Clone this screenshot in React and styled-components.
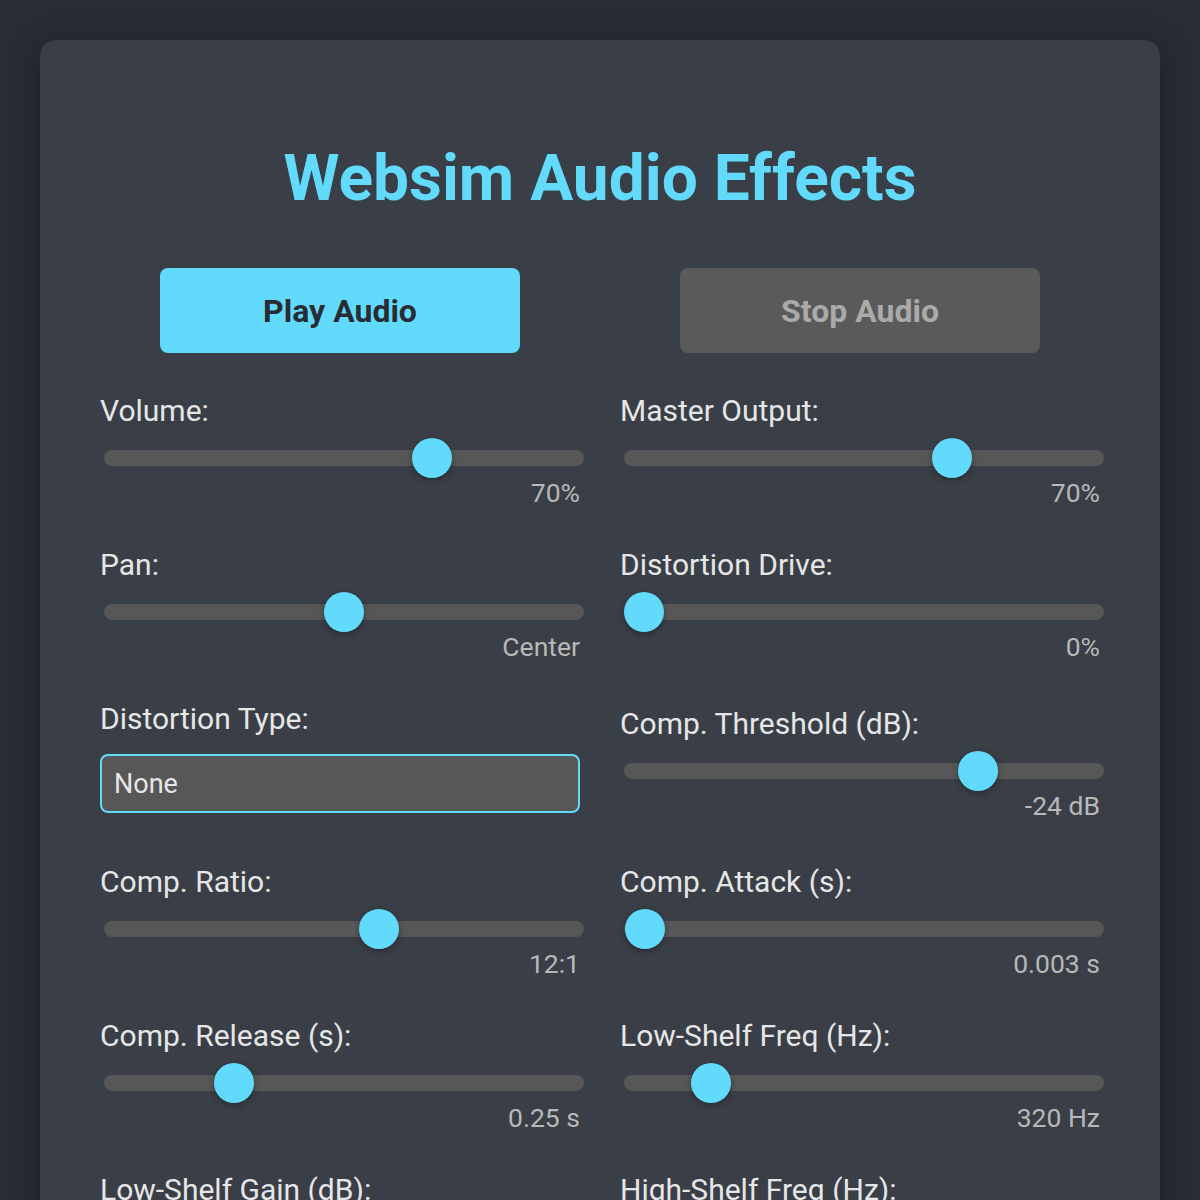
import React, { useState } from 'react';
import styled, { createGlobalStyle } from 'styled-components';

const GlobalStyle = createGlobalStyle`
  body {
    margin: 0;
    background: #282c34;
    font-family: Roboto, "Noto Sans", "Liberation Sans", sans-serif;
    color: #e6e6e6;
  }
`;

const Page = styled.div`
  padding: 40px 40px;
`;

const Card = styled.div`
  background: #3a3f47;
  border-radius: 16px;
  padding: 60px 60px 60px;
  box-shadow: 0 4px 30px rgba(0, 0, 0, 0.3);
`;

const Title = styled.h1`
  margin: 40px 0 51px;
  text-align: center;
  color: #61dafb;
  font-size: 64px;
  line-height: 77px;
  font-weight: 700;
`;

const Grid = styled.div`
  display: grid;
  grid-template-columns: 1fr 1fr;
  column-gap: 40px;
  row-gap: 41px;
  align-items: center;
`;

const ButtonCell = styled.div`
  display: flex;
  justify-content: center;
`;

const Button = styled.button`
  width: 360px;
  height: 85px;
  border: none;
  border-radius: 8px;
  font-family: inherit;
  font-size: 32px;
  font-weight: 700;
  cursor: pointer;
  background: ${({ $primary }) => ($primary ? '#61dafb' : '#5a5a5a')};
  color: ${({ $primary }) => ($primary ? '#282c34' : '#aaaaaa')};
`;

const Control = styled.div`
  display: flex;
  flex-direction: column;
  padding-bottom: ${({ $extra }) => ($extra ? '11px' : '0')};
`;

const Label = styled.label`
  font-size: 30px;
  line-height: 34px;
  color: #e6e6e6;
  margin-bottom: 16px;
`;

const Range = styled.input.attrs({ type: 'range' })`
  -webkit-appearance: none;
  appearance: none;
  width: 100%;
  margin: 6px 0 0 4px;
  height: 16px;
  border-radius: 8px;
  background: #575757;
  outline: none;

  &::-webkit-slider-thumb {
    -webkit-appearance: none;
    appearance: none;
    width: 40px;
    height: 40px;
    border-radius: 50%;
    background: #61dafb;
    cursor: pointer;
    box-shadow: 0 2px 6px rgba(0, 0, 0, 0.35);
  }
`;

const Value = styled.span`
  align-self: flex-end;
  margin: 12px 0 0 0;
  font-size: 26.5px;
  line-height: 29px;
  color: #b8b8b8;
`;

const Select = styled.select`
  height: 59px;
  margin-top: 2px;
  padding: 0 12px;
  border: 2px solid #61dafb;
  border-radius: 8px;
  background: #575757;
  color: #e6e6e6;
  font-family: inherit;
  font-size: 27px;
  appearance: none;
  -webkit-appearance: none;
  outline: none;
`;

const controls = [
  { label: 'Volume:', min: 0, max: 100, value: 70, text: '70%' },
  { label: 'Master Output:', min: 0, max: 100, value: 70, text: '70%' },
  { label: 'Pan:', min: -100, max: 100, value: 0, text: 'Center' },
  { label: 'Distortion Drive:', min: 0, max: 100, value: 0, text: '0%' },
  { select: true, label: 'Distortion Type:' },
  { label: 'Comp. Threshold (dB):', min: -100, max: 0, value: -24, text: '-24 dB' },
  { label: 'Comp. Ratio:', min: 1, max: 20, value: 12, text: '12:1' },
  { label: 'Comp. Attack (s):', min: 0, max: 1, step: 0.001, value: 0.003, text: '0.003 s' },
  { label: 'Comp. Release (s):', min: 0, max: 1, step: 0.01, value: 0.25, text: '0.25 s' },
  { label: 'Low-Shelf Freq (Hz):', min: 20, max: 2000, value: 320, text: '320 Hz' },
  { label: 'Low-Shelf Gain (dB):', min: -40, max: 40, value: 0, text: '0 dB' },
  { label: 'High-Shelf Freq (Hz):', min: 1000, max: 20000, value: 3200, text: '3200 Hz' },
];

const SliderControl = ({ item }) => {
  const [val, setVal] = useState(item.value);
  return (
    <Control>
      <Label>{item.label}</Label>
      <Range
        min={item.min}
        max={item.max}
        step={item.step || 1}
        value={val}
        onChange={(e) => setVal(e.target.value)}
      />
      <Value>{item.text}</Value>
    </Control>
  );
};

const App = () => {
  return (
    <Page>
      <GlobalStyle />
      <Card>
        <Title>Websim Audio Effects</Title>
        <Grid>
          <ButtonCell>
            <Button $primary>Play Audio</Button>
          </ButtonCell>
          <ButtonCell>
            <Button>Stop Audio</Button>
          </ButtonCell>
          {controls.map((item) =>
            item.select ? (
              <Control key={item.label} $extra>
                <Label>{item.label}</Label>
                <Select defaultValue="none">
                  <option value="none">None</option>
                  <option value="soft">Soft Clip</option>
                  <option value="hard">Hard Clip</option>
                </Select>
              </Control>
            ) : (
              <SliderControl key={item.label} item={item} />
            )
          )}
        </Grid>
      </Card>
    </Page>
  );
};

export default App;
